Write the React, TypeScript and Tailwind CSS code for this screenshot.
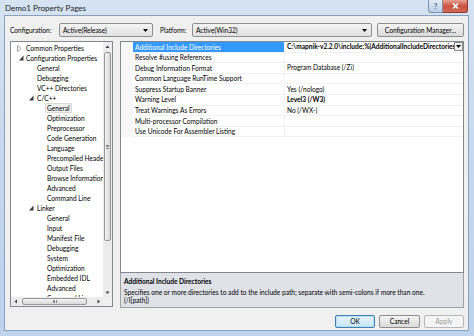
import React from 'react';

type TreeItem = { label: string; level: number; arrow?: 'closed' | 'open'; selected?: boolean };

const tree: TreeItem[] = [
  { label: 'Common Properties', level: 0, arrow: 'closed' },
  { label: 'Configuration Properties', level: 0, arrow: 'open' },
  { label: 'General', level: 1 },
  { label: 'Debugging', level: 1 },
  { label: 'VC++ Directories', level: 1 },
  { label: 'C/C++', level: 1, arrow: 'open' },
  { label: 'General', level: 2, selected: true },
  { label: 'Optimization', level: 2 },
  { label: 'Preprocessor', level: 2 },
  { label: 'Code Generation', level: 2 },
  { label: 'Language', level: 2 },
  { label: 'Precompiled Headers', level: 2 },
  { label: 'Output Files', level: 2 },
  { label: 'Browse Information', level: 2 },
  { label: 'Advanced', level: 2 },
  { label: 'Command Line', level: 2 },
  { label: 'Linker', level: 1, arrow: 'open' },
  { label: 'General', level: 2 },
  { label: 'Input', level: 2 },
  { label: 'Manifest File', level: 2 },
  { label: 'Debugging', level: 2 },
  { label: 'System', level: 2 },
  { label: 'Optimization', level: 2 },
  { label: 'Embedded IDL', level: 2 },
  { label: 'Advanced', level: 2 },
  { label: 'Command Line', level: 2 },
];

const props: { name: string; value: string; bold?: boolean }[] = [
  { name: 'Additional Include Directories', value: 'C:\\mapnik-v2.2.0\\include;%(AdditionalIncludeDirectories)', bold: true },
  { name: 'Resolve #using References', value: '' },
  { name: 'Debug Information Format', value: 'Program Database (/Zi)' },
  { name: 'Common Language RunTime Support', value: '' },
  { name: 'Suppress Startup Banner', value: 'Yes (/nologo)' },
  { name: 'Warning Level', value: 'Level3 (/W3)', bold: true },
  { name: 'Treat Warnings As Errors', value: 'No (/WX-)' },
  { name: 'Multi-processor Compilation', value: '' },
  { name: 'Use Unicode For Assembler Listing', value: '' },
];

const indent = ['pl-[15px]', 'pl-[26px]', 'pl-[36px]'];

function DownArrow() {
  return (
    <svg width="5" height="3" viewBox="0 0 5 3">
      <path d="M0 0 H5 L2.5 3 Z" fill="#000" />
    </svg>
  );
}

function Combo({ text, width }: { text: string; width: string }) {
  return (
    <div className={`${width} h-[14px] flex items-center justify-between pl-[3px] pr-[4px] rounded-[2px] border border-[#8e8f8f] bg-gradient-to-b from-[#f4f4f4] to-[#e1e1e1] whitespace-nowrap`}>
      <span>{text}</span>
      <DownArrow />
    </div>
  );
}

function WinButton({ children, kind = 'normal', width }: { children: React.ReactNode; kind?: 'normal' | 'default' | 'disabled'; width: string }) {
  const look =
    kind === 'default'
      ? 'border-[#3c7fb1] from-[#eaf6fd] to-[#c4e5f6] shadow-[inset_0_0_0_1px_#b6e0f6]'
      : kind === 'disabled'
      ? 'border-[#b5b9bc] from-[#f4f4f4] to-[#f4f4f4] text-[#9a9a9a]'
      : 'border-[#8e8f8f] from-[#f4f4f4] to-[#dadada]';
  return (
    <div className={`${width} h-full flex items-center justify-center rounded-[2px] border bg-gradient-to-b whitespace-nowrap ${look}`}>
      {children}
    </div>
  );
}

function ScrollArrow({ dir }: { dir: 'up' | 'down' | 'left' | 'right' }) {
  const d = {
    up: 'M0.5 3 L2.5 0.5 L4.5 3 Z',
    down: 'M0.5 0.5 L2.5 3 L4.5 0.5 Z',
    left: 'M3 0.5 L0.5 2.5 L3 4.5 Z',
    right: 'M0.5 0.5 L3 2.5 L0.5 4.5 Z',
  }[dir];
  const horiz = dir === 'left' || dir === 'right';
  return (
    <div className="w-[9px] h-[9px] flex items-center justify-center shrink-0">
      <svg width={horiz ? 4 : 5} height={horiz ? 5 : 4} viewBox={horiz ? '0 0 4 5' : '0 0 5 4'}>
        <path d={d} fill="#404040" />
      </svg>
    </div>
  );
}

export default function App() {
  return (
    <div className="w-[474px] h-[336px] overflow-hidden flex flex-col bg-gradient-to-b from-[#d6e3f2] via-[#c4d7ee] to-[#bdd2ec] font-['Lato','Noto_Sans',sans-serif] text-[6.6px] text-black leading-none">
      {/* title bar */}
      <div className="h-[15px] shrink-0 flex items-start justify-between pl-[5px] pr-[6px]">
        <span className="text-[8px] mt-[4px] text-[#1b1b1b]">Demo1 Property Pages</span>
        <div className="flex h-[13px]">
          <div className="w-[15px] h-full flex items-center justify-center border border-[#7e91ab] border-t-0 rounded-bl-[3px] bg-gradient-to-b from-[#e4ecf6] to-[#b9cde6] text-[7px] font-bold text-[#4b5f7a]">?</div>
          <div className="w-[25px] h-full flex items-center justify-center border border-[#8d3a30] border-t-0 border-l-0 rounded-br-[3px] bg-gradient-to-b from-[#e8a394] via-[#c9503f] to-[#d36a55]">
            <svg width="7" height="6" viewBox="0 0 7 6">
              <path d="M1 0.5 L6 5.5 M6 0.5 L1 5.5" stroke="#fff" strokeWidth="1.6" />
            </svg>
          </div>
        </div>
      </div>

      {/* client area */}
      <div className="flex-1 ml-[4px] mr-[5px] mb-[5px] border border-[#8aa0bc] bg-[#f0f0f0] flex flex-col pl-[5px] pr-[4px] pt-[7px]">
        <div className="h-[14px] flex items-center shrink-0">
          <span className="w-[49px]">Configuration:</span>
          <Combo text="Active(Release)" width="w-[94px]" />
          <span className="w-[32px] ml-[7px]">Platform:</span>
          <Combo text="Active(Win32)" width="w-[180px]" />
          <div className="ml-[5px] h-full">
            <WinButton width="w-[87px]">Configuration Manager...</WinButton>
          </div>
        </div>

        <div className="mt-[4px] h-[267px] flex gap-[7px] shrink-0">
          {/* tree */}
          <div className="w-[103px] h-[266px] border border-[#828790] bg-white flex flex-col">
            <div className="flex h-[255px]">
              <div className="flex-1 overflow-hidden pt-[1px]">
                {tree.map((t, i) => (
                  <div key={i} className={`h-[10px] flex items-center whitespace-nowrap relative ${indent[t.level]}`}>
                    {t.arrow && (
                      <span className="absolute top-[2px]" style={{ left: t.level === 0 ? (t.arrow === 'open' ? 8 : 6) : 18 }}>
                        {t.arrow === 'closed' ? (
                          <svg width="5" height="7" viewBox="0 0 5 7">
                            <path d="M0.5 0.5 L4 3.5 L0.5 6.5 Z" fill="none" stroke="#a0a0a0" />
                          </svg>
                        ) : (
                          <svg width="5" height="6" viewBox="0 0 5 6">
                            <path d="M4.5 0.5 L4.5 5.5 L0 5.5 Z" fill="#3c3c3c" />
                          </svg>
                        )}
                      </span>
                    )}
                    <span className={t.selected ? 'px-[1px] -mx-[2px] h-[10px] flex items-center border border-[#d9d9d9] bg-[#f2f2f2] rounded-[1px]' : ''}>
                      {t.label}
                    </span>
                  </div>
                ))}
              </div>
              {/* vertical scrollbar */}
              <div className="w-[9px] bg-[#ececec] flex flex-col">
                <ScrollArrow dir="up" />
                <div className="mt-[1px] h-[189px] mx-[1px] rounded-[2px] border border-[#979797] bg-gradient-to-r from-[#f3f3f3] to-[#d9d9d9] flex items-center justify-center">
                  <div className="w-[3px] h-[4px] border-y border-[#8a8a8a] flex items-center">
                    <div className="w-full h-[1px] bg-[#8a8a8a]" />
                  </div>
                </div>
                <div className="flex-1" />
                <ScrollArrow dir="down" />
              </div>
            </div>
            {/* horizontal scrollbar */}
            <div className="h-[9px] flex">
              <div className="flex-1 bg-[#ececec] flex items-center">
                <ScrollArrow dir="left" />
                <div className="ml-[2px] w-[65px] h-[7px] rounded-[2px] border border-[#979797] bg-gradient-to-b from-[#f3f3f3] to-[#d9d9d9] flex items-center justify-center">
                  <div className="w-[4px] h-[3px] border-x border-[#8a8a8a] flex justify-center">
                    <div className="w-[1px] h-full bg-[#8a8a8a]" />
                  </div>
                </div>
                <div className="flex-1" />
                <ScrollArrow dir="right" />
              </div>
              <div className="w-[9px] bg-[#f0f0f0]" />
            </div>
          </div>

          {/* property grid + description */}
          <div className="w-[344px] flex flex-col">
            <div className="h-[232px] border border-[#828790] bg-white">
              {props.map((p, i) => (
                <div key={i} className="h-[10.6px] flex">
                  <div className="w-[12px] bg-[#f7f7f7]" />
                  <div className={`w-[152px] flex items-center pl-[2px] border-b border-r border-[#f0f0f0] whitespace-nowrap ${i === 0 ? 'bg-[#3399ff] text-white' : ''}`}>
                    {p.name}
                  </div>
                  <div className="flex-1 min-w-0 flex items-center border-b border-[#f0f0f0] pl-[2px]">
                    <span className={`flex-1 overflow-hidden whitespace-nowrap leading-[9px] ${p.bold ? 'font-bold' : ''}`}>{p.value}</span>
                    {i === 0 && (
                      <div className="w-[9px] h-[9px] shrink-0 border border-[#8b8b8b] bg-[#f0f0f0] flex items-center justify-center">
                        <DownArrow />
                      </div>
                    )}
                  </div>
                </div>
              ))}
            </div>
            <div className="h-[35px] border border-t-0 border-[#a0a0a0] bg-[#dfe3e9] px-[3px] pt-[5px] flex flex-col gap-[3px]">
              <span className="font-bold">Additional Include Directories</span>
              <span className="leading-[8.5px]">
                Specifies one or more directories to add to the include path; separate with semi-colons if more than one.
                <br />
                (/I[path])
              </span>
            </div>
          </div>
        </div>

        <div className="mt-[7px] h-[13px] flex justify-end gap-[4px] shrink-0">
          <WinButton width="w-[40px]" kind="default">OK</WinButton>
          <WinButton width="w-[41px]">Cancel</WinButton>
          <WinButton width="w-[40px]" kind="disabled">Apply</WinButton>
        </div>
      </div>
    </div>
  );
}
